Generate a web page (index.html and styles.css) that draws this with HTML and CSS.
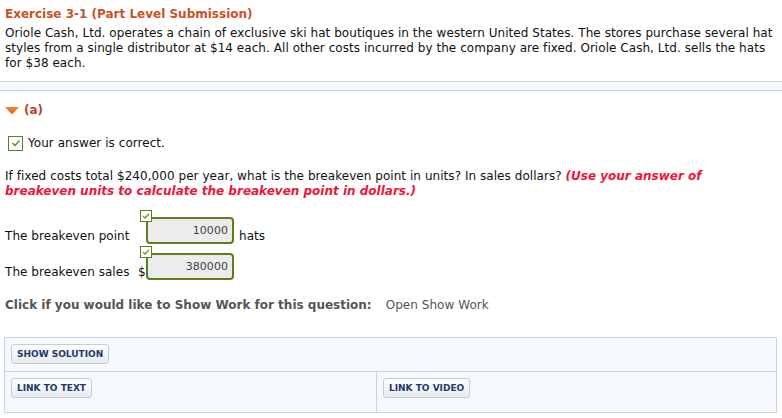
FILE: index.html
```html
<!DOCTYPE html>
<html>
<head>
<meta charset="utf-8">
<link rel="stylesheet" href="styles.css">
</head>
<body>
<div class="page">
  <h1 class="title">Exercise 3-1 (Part Level Submission)</h1>
  <p class="intro">Oriole Cash, Ltd. operates a chain of exclusive ski hat boutiques in the western United States. The stores purchase several hat styles from a single distributor at $14 each. All other costs incurred by the company are fixed. Oriole Cash, Ltd. sells the hats for $38 each.</p>
</div>
<div class="band"></div>
<div class="page">
  <div class="part">
    <svg class="tri" width="14" height="8" viewBox="0 0 14 8"><defs><linearGradient id="g" x1="0" y1="0" x2="0" y2="1"><stop offset="0" stop-color="#f7823a"/><stop offset="1" stop-color="#e85a12"/></linearGradient></defs><polygon points="0,0 14,0 7,7.5" fill="url(#g)"/></svg>
    <span class="part-label">(a)</span>
  </div>
  <div class="correct">
    <span class="bigcheck"><svg width="10" height="8" viewBox="0 0 10 8"><polyline points="1.5,4 4,6.5 8.5,1.5" fill="none" stroke="#5f9a36" stroke-width="1.6"/></svg></span>
    <span>Your answer is correct.</span>
  </div>
  <p class="question">If fixed costs total $240,000 per year, what is the breakeven point in units? In sales dollars? <em class="hint">(Use your answer of breakeven units to calculate the breakeven point in dollars.)</em></p>
  <div class="answers">
    <span class="label">The breakeven point</span>
    <span class="pre"></span>
    <span class="field"><span class="mini"><svg width="8" height="6" viewBox="0 0 8 6"><polyline points="1,3 3,5 7,1" fill="none" stroke="#5f9a36" stroke-width="1.3"/></svg></span><span class="box">10000</span></span>
    <span class="post">hats</span>
    <span class="label">The breakeven sales</span>
    <span class="pre">$</span>
    <span class="field"><span class="mini"><svg width="8" height="6" viewBox="0 0 8 6"><polyline points="1,3 3,5 7,1" fill="none" stroke="#5f9a36" stroke-width="1.3"/></svg></span><span class="box">380000</span></span>
    <span class="post"></span>
  </div>
  <div class="showwork">
    <span class="sw-label">Click if you would like to Show Work for this question:</span>
    <span class="sw-link">Open Show Work</span>
  </div>
</div>
<div class="tools">
  <div class="tools-row">
    <div class="cell"><span class="btn">SHOW SOLUTION</span></div>
  </div>
  <div class="tools-row split">
    <div class="cell"><span class="btn">LINK TO TEXT</span></div>
    <div class="cell"><span class="btn">LINK TO VIDEO</span></div>
  </div>
</div>
</body>
</html>
```
FILE: styles.css
```css
* { box-sizing: border-box; }
html, body { margin: 0; padding: 0; background: #fff; }
body {
  font-family: "DejaVu Sans", Verdana, sans-serif;
  font-size: 12px;
  letter-spacing: 0.05px;
  color: #111;
  width: 782px;
  height: 418px;
  overflow: hidden;
}
.page { padding-left: 5px; padding-right: 8px; }
.title {
  margin: 5px 0 0 0;
  font-size: 12px;
  line-height: 18px;
  font-weight: bold;
  letter-spacing: 0;
  color: #c9521f;
}
.intro {
  margin: 3px 0 0 0;
  line-height: 15px;
}
.band {
  margin-top: 10px;
  height: 10px;
  border-top: 1px solid #cdd4de;
  border-bottom: 1px solid #c5cedb;
  background: #f4f7fb;
}
.part {
  display: flex;
  align-items: center;
  gap: 5px;
  margin-top: 10px;
  height: 18px;
}
.tri { display: block; margin-top: 1px; }
.part-label { font-weight: bold; color: #b5452b; letter-spacing: 0; }
.correct {
  display: flex;
  align-items: center;
  gap: 5px;
  margin-top: 16px;
  padding-left: 3px;
  line-height: 16px;
}
.bigcheck {
  width: 15px; height: 15px;
  border: 1px solid #52802a;
  background: #fff;
  display: flex; align-items: center; justify-content: center;
}
.question {
  margin: 18px 0 0 0;
  line-height: 15px;
}
.hint { color: #f0143c; font-weight: bold; letter-spacing: 0; }
.answers {
  margin-top: 18px;
  display: grid;
  grid-template-columns: 133px 8px 88px auto;
  row-gap: 9px;
  align-items: end;
}
.label, .pre, .post { line-height: 15px; }
.post { padding-left: 5px; }
.field { position: relative; display: block; }
.box {
  display: flex;
  align-items: center;
  justify-content: flex-end;
  height: 27px;
  padding-right: 4px;
  padding-bottom: 1px;
  border: 2px solid #5c7e1d;
  border-radius: 4px;
  background: #ececec;
  font-size: 11px;
  color: #444;
}
.mini {
  position: absolute;
  left: -6px; top: -7px;
  width: 12px; height: 12px;
  border: 1px solid #5c7e1d;
  background: #fff;
  display: flex; align-items: center; justify-content: center;
}
.showwork {
  margin-top: 18px;
  display: flex;
  gap: 14px;
  line-height: 15px;
  color: #555;
}
.sw-label { font-weight: bold; letter-spacing: 0; }
.tools {
  margin: 24px 0 0 4px;
  width: 773px;
  border: 1px solid #c9d2de;
  background: #f5f8fc;
}
.tools-row { height: 33px; display: flex; }
.tools-row.split { height: 41px; border-top: 1px solid #c9d2de; }
.cell { padding: 6px 0 0 6px; flex: 1; }
.split .cell:first-child { border-right: 1px solid #c9d2de; flex: 0 0 372px; }
.btn {
  display: inline-block;
  height: 20px;
  line-height: 18px;
  padding: 0 5px;
  border: 1px solid #c7ccd3;
  border-radius: 3px;
  background: linear-gradient(#ffffff, #e8ebef);
  font-size: 9px;
  font-weight: bold;
  letter-spacing: 0;
  color: #223a6a;
}
```
